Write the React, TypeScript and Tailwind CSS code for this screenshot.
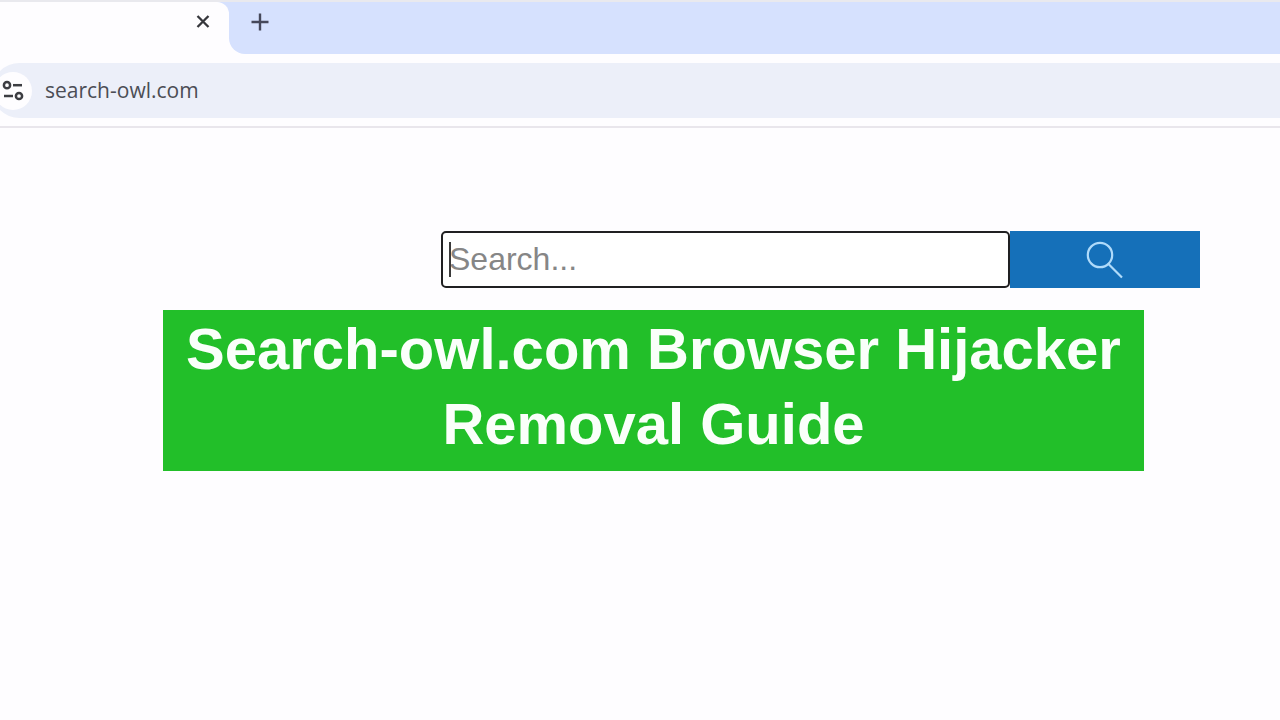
import { useState } from "react";

function TuneIcon() {
  return (
    <svg width="22" height="22" viewBox="0 0 22 22" fill="none" stroke="#3c3d42" strokeWidth="2.5">
      <circle cx="5" cy="5.2" r="3.1" />
      <path d="M11 5.2h9" />
      <path d="M2 16h9" />
      <circle cx="17" cy="16" r="3.1" />
    </svg>
  );
}

function SearchIcon() {
  return (
    <svg width="38" height="38" viewBox="0 0 38 38" fill="none" stroke="#b0dbfa" strokeWidth="2.2">
      <circle cx="14" cy="14" r="12.2" />
      <path d="M22.5 23L36 36.5" />
    </svg>
  );
}

function TabStrip() {
  return (
    <div className="flex h-[54px] border-t-2 border-[#e9e9ee] bg-[#fefdff]">
      <div className="flex w-[229px] shrink-0 bg-[#d6e1fe]">
        <div className="flex flex-1 justify-end rounded-tr-xl bg-[#fefdff] pt-3 pr-[18px]">
          <button aria-label="Close tab" className="h-4 w-4">
            <svg width="16" height="16" viewBox="0 0 16 16" stroke="#36373c" strokeWidth="2.3">
              <path d="M2.5 2l11 11M13.5 2l-11 11" />
            </svg>
          </button>
        </div>
      </div>
      <div className="flex-1 rounded-bl-2xl bg-[#d6e1fe] pt-[11px] pl-[22px]">
        <button aria-label="New tab" className="block h-[18px] w-[18px]">
          <svg width="18" height="18" viewBox="0 0 18 18" stroke="#46485a" strokeWidth="2.4">
            <path d="M9 0.5v17M0.5 9h17" />
          </svg>
        </button>
      </div>
    </div>
  );
}

function AddressBar() {
  const [url, setUrl] = useState("search-owl.com");

  return (
    <div className="overflow-hidden border-b-2 border-[#e9e6ec] pt-[9px] pb-2">
      <div className="-ml-2 flex h-[55px] items-center rounded-l-full bg-[#eceff9] pl-[2px]">
        <button
          aria-label="View site information"
          className="flex h-[38px] w-[38px] items-center justify-center rounded-full bg-[#fefdff]"
        >
          <TuneIcon />
        </button>
        <input
          aria-label="Address"
          value={url}
          onChange={(e) => setUrl(e.target.value)}
          className="ml-[13px] flex-1 bg-transparent font-['Open_Sans',sans-serif] text-[21px] text-[#4b4d55] outline-none"
        />
      </div>
    </div>
  );
}

export default function App() {
  const [query, setQuery] = useState("");

  return (
    <div className="min-h-screen bg-[#fefdff] font-['Liberation_Sans',Arial,sans-serif]">
      <header>
        <TabStrip />
        <AddressBar />
      </header>
      <main className="pt-[103px]">
        <form
          onSubmit={(e) => e.preventDefault()}
          className="mr-20 ml-auto flex h-[57px] max-w-[759px]"
        >
          <div className="relative flex-1">
            <input
              type="text"
              aria-label="Search"
              placeholder="Search..."
              value={query}
              onChange={(e) => setQuery(e.target.value)}
              className="h-full w-full rounded-[5px] border-2 border-[#202022] bg-white px-[6px] text-[32px] text-[#333333] outline-none placeholder:text-[#868686]"
            />
            {/* text cursor */}
            <span className="absolute top-[11px] left-2 h-[35px] w-[2px] bg-[#3a3a3a]" />
          </div>
          <button
            aria-label="Submit search"
            className="flex w-[190px] items-center justify-center bg-[#1570b9]"
          >
            <SearchIcon />
          </button>
        </form>
        <div className="mt-[22px] pl-[27px]">
          <h1 className="mx-auto max-w-[981px] bg-[#22bf29] pt-px pb-[10px] text-center text-[58px] leading-[75px] font-bold text-[#fafffa]">
            Search-owl.com Browser Hijacker Removal Guide
          </h1>
        </div>
      </main>
    </div>
  );
}
